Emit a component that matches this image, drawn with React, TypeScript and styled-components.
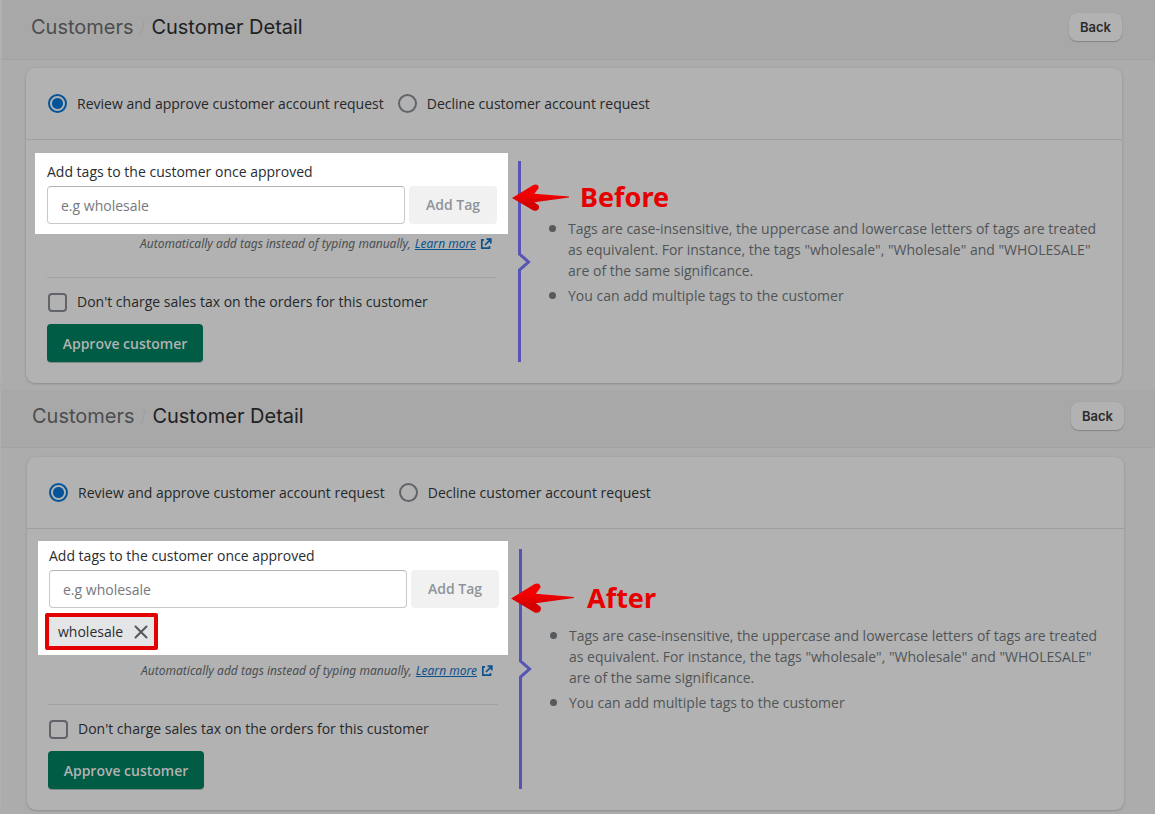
import React, { useId } from "react";
import styled, { createGlobalStyle, css } from "styled-components";

const GlobalStyle = createGlobalStyle`
  *, *::before, *::after { box-sizing: border-box; }
  body {
    margin: 0;
    background: #acacac;
    color: #25282a;
    font: 14px/20px "Open Sans", "Noto Sans", sans-serif;
  }
  button, input { font: inherit; }
`;

const Panel = styled.section<{ $edge: number }>`
  position: relative;
  border-left: ${(p) => p.$edge}px solid #b1b1b1;
`;

const Header = styled.header<{ $compact: boolean }>`
  display: flex;
  align-items: center;
  justify-content: space-between;
  height: ${(p) => (p.$compact ? 58 : 60)}px;
  padding: ${(p) => (p.$compact ? "0 31px 6px" : "0 33px 6px 29px")};
  background: #a8a8a8;
  border-bottom: 1px solid #a3a3a3;
`;

const Breadcrumb = styled.nav`
  display: flex;
  align-items: center;
  gap: 6px;
  font-family: Inter, sans-serif;
  font-size: 20px;
  line-height: 28px;
`;

const CrumbLink = styled.a`
  color: #4b4d4f;
  text-decoration: none;
`;

const Slash = styled.span`
  color: #a0a0a0;
  font-size: 16px;
`;

const Title = styled.h1`
  margin: 0;
  font: inherit;
  color: #202123;
`;

const BackButton = styled.button`
  height: 28px;
  padding: 0 11px;
  border: 0;
  border-radius: 8px;
  background: #b2b2b2;
  box-shadow: 0 1px 1px #858585, 0 0 1px #999;
  color: #2b2b2b;
  font: 600 13px/20px Inter, sans-serif;
`;

const Card = styled.div<{ $compact: boolean }>`
  margin: ${(p) => (p.$compact ? "9px 31px 7px 26px" : "8px 33px 7px 24px")};
  border-radius: 9px;
  background: #b2b2b2;
  box-shadow: 0 1px 2px #8f8f8f, 0 0 3px #a2a2a2;
`;

const Choices = styled.div`
  display: flex;
  align-items: center;
  gap: 14px;
  height: 72px;
  padding: 0 22px;
  border-bottom: 1px solid #9d9fa0;
`;

const Choice = styled.label`
  display: flex;
  align-items: center;
  gap: 10px;
`;

const Radio = styled.input`
  appearance: none;
  width: 19px;
  height: 19px;
  margin: 0;
  border: 2px solid #61656a;
  border-radius: 50%;

  &:checked {
    border-color: #05549a;
    background: radial-gradient(circle, #05549a 5px, transparent 6px);
  }
`;

const Body = styled.div<{ $compact: boolean }>`
  display: flex;
  padding: ${(p) => (p.$compact ? 12 : 13)}px 21px 21px;
`;

const Form = styled.form`
  flex: 0 1 450px;
  min-width: 0;
`;

const Spotlight = styled.div<{ $compact: boolean }>`
  background: #fff;
  color: #2a2d30;
  ${(p) =>
    p.$compact
      ? css`
          margin: 0 -10px 6px;
          padding: 5px 9px 5px 11px;
        `
      : css`
          margin: 0 -11px 0 -12px;
          padding: 9px 11px 10px 12px;
        `}
`;

const FieldLabel = styled.label`
  display: block;
  margin-bottom: 4px;
`;

const FieldRow = styled.div`
  display: flex;
  gap: 4px;
`;

const TextInput = styled.input`
  flex: 1;
  min-width: 0;
  height: 38px;
  padding: 0 13px;
  border: 1px solid #c5c9cd;
  border-top-color: #afb4b9;
  border-radius: 4px;
  background: #fff;
  color: #202223;

  &::placeholder {
    color: #75797d;
    opacity: 1;
  }
`;

const AddButton = styled.button`
  width: 88px;
  height: 38px;
  padding: 0;
  border: 0;
  border-radius: 4px;
  background: #f1f1f1;
  color: #8e9499;
  font-weight: 600;
`;

const TagFrame = styled.div`
  display: inline-flex;
  margin: 5px 0 0 -4px;
  vertical-align: top;
  border: 4px solid #e30000;
  border-radius: 2px;
`;

const Tag = styled.span`
  display: flex;
  align-items: center;
  gap: 11px;
  height: 29px;
  padding: 0 6px 0 9px;
  background: #e4e5e7;
`;

const RemoveButton = styled.button`
  display: flex;
  padding: 0;
  border: 0;
  background: none;
  color: #53575b;
`;

const Hint = styled.p`
  display: flex;
  align-items: center;
  justify-content: flex-end;
  gap: 4px;
  margin: 0 5px 23px 0;
  color: #4a4e51;
  font-family: "Noto Sans", sans-serif;
  font-size: 12px;
  font-style: italic;
`;

const HintLink = styled.a`
  display: inline-flex;
  align-items: center;
  gap: 4px;
  color: #0e528d;
  text-decoration: underline;
`;

const Rule = styled.hr`
  height: 1px;
  margin: 0 0 14px;
  border: 0;
  background: #a0a1a3;
`;

const TaxOption = styled.label`
  display: flex;
  align-items: center;
  gap: 10px;
  margin: 0 0 12px 1px;
`;

const Checkbox = styled.input`
  appearance: none;
  width: 19px;
  height: 19px;
  margin: 0;
  border: 2px solid #61656a;
  border-radius: 4px;
`;

const ApproveButton = styled.button`
  height: 38px;
  width: 156px;
  padding: 1px 0 0;
  border: 0;
  border-radius: 4px;
  background: #005c44;
  box-shadow: 0 1px 0 #7f8a86;
  color: #b2b2b2;
  font-weight: 600;
`;

const Bracket = styled.div`
  display: flex;
  flex-direction: column;
  flex: 0 0 13px;
  margin: 8px 0 0 21px;
`;

const BracketLine = styled.span`
  flex: 1;
  width: 3px;
  background: #5654b4;
`;

const Notes = styled.ul`
  flex: 1;
  display: flex;
  flex-direction: column;
  gap: 4px;
  align-self: center;
  margin: 8px 0 0;
  padding: 0 0 0 37px;
  list-style: none;
  line-height: 21px;
  color: #515558;
`;

const Note = styled.li`
  position: relative;

  &::before {
    content: "";
    position: absolute;
    top: 7px;
    left: -19px;
    width: 7px;
    height: 7px;
    border-radius: 50%;
    background: #565a5d;
  }
`;

const Callout = styled.div<{ $top: number; $gap: number }>`
  position: absolute;
  top: ${(p) => p.$top}px;
  left: 509px;
  display: flex;
  align-items: center;
  gap: ${(p) => p.$gap}px;
  color: #e60000;
  font-family: "Noto Sans", sans-serif;
  font-size: 27px;
  line-height: 36px;
  font-weight: 700;
`;

function Arrow({ width, height }: { width: number; height: number }) {
  const id = useId();
  return (
    <svg width={width} height={height} viewBox="0 0 58 28" preserveAspectRatio="none" aria-hidden="true">
      <defs>
        <linearGradient id={id} x1="0" y1="0" x2="0" y2="1">
          <stop offset="0.35" stopColor="#f50000" />
          <stop offset="0.75" stopColor="#d40000" />
        </linearGradient>
      </defs>
      <path
        fill={`url(#${id})`}
        d="M1 14.500 22 1C26-1 29 3 26 6L23 10 57 13 57 14 23 19 27 22C29 25 26 29 22 27.500Z"
      />
    </svg>
  );
}

function ExternalIcon() {
  return (
    <svg width="12" height="12" viewBox="0 0 12 12" fill="none" stroke="currentColor" strokeWidth="1.700" aria-hidden="true">
      <path d="M4 1.800H1.800V10.200H9.500V8M5 7 10.300 1.700M6.500 1.200H10.800V5.500" />
    </svg>
  );
}

function CloseIcon() {
  return (
    <svg width="14" height="14" viewBox="0 0 14 14" fill="none" stroke="currentColor" strokeWidth="2" strokeLinecap="round" aria-hidden="true">
      <path d="M1.500 1.500 12.500 12.500M12.500 1.500 1.500 12.500" />
    </svg>
  );
}

type DetailProps = {
  name: string;
  edge: number;
  tags: string[];
  callout: { text: string; top: number; gap: number; width: number; height: number };
};

function CustomerDetail({ name, edge, tags, callout }: DetailProps) {
  const tagged = tags.length > 0;
  return (
    <Panel $edge={edge}>
      <Header $compact={tagged}>
        <Breadcrumb>
          <CrumbLink href="#customers">Customers</CrumbLink>
          <Slash>/</Slash>
          <Title>Customer Detail</Title>
        </Breadcrumb>
        <BackButton type="button">Back</BackButton>
      </Header>
      <Card $compact={tagged}>
        <Choices>
          <Choice>
            <Radio type="radio" name={name} defaultChecked />
            Review and approve customer account request
          </Choice>
          <Choice>
            <Radio type="radio" name={name} />
            Decline customer account request
          </Choice>
        </Choices>
        <Body $compact={tagged}>
          <Form>
            <Spotlight $compact={tagged}>
              <FieldLabel htmlFor={`${name}-tag`}>Add tags to the customer once approved</FieldLabel>
              <FieldRow>
                <TextInput id={`${name}-tag`} type="text" placeholder="e.g wholesale" />
                <AddButton type="button" disabled>Add Tag</AddButton>
              </FieldRow>
              {tags.map((tag) => (
                <TagFrame key={tag}>
                  <Tag>
                    {tag}
                    <RemoveButton type="button" aria-label={`Remove ${tag}`}>
                      <CloseIcon />
                    </RemoveButton>
                  </Tag>
                </TagFrame>
              ))}
            </Spotlight>
            <Hint>
              Automatically add tags instead of typing manually,
              <HintLink href="#learn-more">
                Learn more
                <ExternalIcon />
              </HintLink>
            </Hint>
            <Rule />
            <TaxOption>
              <Checkbox type="checkbox" />
              Don't charge sales tax on the orders for this customer
            </TaxOption>
            <ApproveButton type="button">Approve customer</ApproveButton>
          </Form>
          <Bracket>
            <BracketLine />
            <svg width="13" height="18" viewBox="0 0 13 18" fill="none" stroke="#5654b4" strokeWidth="3" aria-hidden="true">
              <path d="M1.500 0V1L10.500 9 1.500 17V18" />
            </svg>
            <BracketLine />
          </Bracket>
          <Notes>
            <Note>
              Tags are case-insensitive, the uppercase and lowercase letters of tags are treated as
              equivalent. For instance, the tags "wholesale", "Wholesale" and "WHOLESALE" are of the
              same significance.
            </Note>
            <Note>You can add multiple tags to the customer</Note>
          </Notes>
        </Body>
      </Card>
      <Callout $top={callout.top} $gap={callout.gap}>
        <Arrow width={callout.width} height={callout.height} />
        <span>{callout.text}</span>
      </Callout>
    </Panel>
  );
}

export default function App() {
  return (
    <>
      <GlobalStyle />
      <main>
        <CustomerDetail
          name="before"
          edge={2}
          tags={[]}
          callout={{ text: "Before", top: 179, gap: 10, width: 59, height: 27 }}
        />
        <CustomerDetail
          name="after"
          edge={1}
          tags={["wholesale"]}
          callout={{ text: "After", top: 190, gap: 12, width: 65, height: 30 }}
        />
      </main>
    </>
  );
}
